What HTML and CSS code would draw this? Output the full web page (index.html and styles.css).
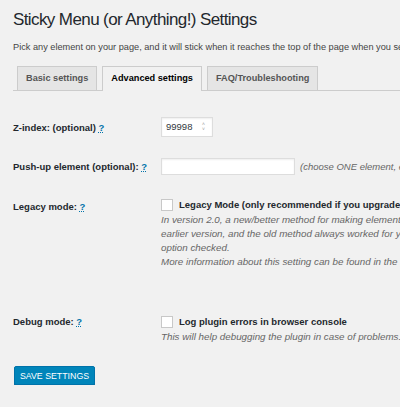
FILE: index.html
```html
<!DOCTYPE html>
<html>
<head>
<meta charset="utf-8">
<link rel="stylesheet" href="styles.css">
</head>
<body>
<div class="wrap">
  <h1 class="title">Sticky Menu (or Anything!) Settings</h1>
  <p class="intro">Pick any element on your page, and it will stick when it reaches the top of the page when you se</p>
  <nav class="tabs">
    <span class="tab">Basic settings</span>
    <span class="tab active">Advanced settings</span>
    <span class="tab">FAQ/Troubleshooting</span>
  </nav>
  <div class="form">
    <div class="row row-z">
      <div class="label">Z-index: (optional) <a class="help">?</a></div>
      <div class="field">
        <div class="num">99998<span class="spin">&#x2C4;<br>&#x2C5;</span></div>
      </div>
    </div>
    <div class="row row-push">
      <div class="label">Push-up element (optional): <a class="help">?</a></div>
      <div class="field inline">
        <div class="text-input"></div>
        <span class="hint">(choose ONE element, e.g.</span>
      </div>
    </div>
    <div class="row row-legacy">
      <div class="label">Legacy mode: <a class="help">?</a></div>
      <div class="field">
        <div class="check"><span class="box"></span>Legacy Mode (only recommended if you upgraded</div>
        <p class="desc">In version 2.0, a new/better method for making elements<br>earlier version, and the old method always worked for you<br>option checked.<br>More information about this setting can be found in the</p>
      </div>
    </div>
    <div class="row row-debug">
      <div class="label">Debug mode: <a class="help">?</a></div>
      <div class="field">
        <div class="check"><span class="box"></span>Log plugin errors in browser console</div>
        <p class="desc">This will help debugging the plugin in case of problems.</p>
      </div>
    </div>
  </div>
  <button class="save">SAVE SETTINGS</button>
</div>
</body>
</html>
```

FILE: styles.css
```css
html, body {
  margin: 0;
  padding: 0;
  background: #f1f1f1;
  overflow: hidden;
}
body {
  width: 400px;
  height: 407px;
  font-family: "Liberation Sans", Arial, sans-serif;
  color: #23282d;
}
.wrap {
  padding: 0 0 0 13px;
  white-space: nowrap;
  overflow: hidden;
}
.title {
  margin: 0;
  padding-top: 9px;
  font-size: 17px;
  letter-spacing: -0.6px;
  font-weight: 400;
  line-height: 22px;
  color: #23282d;
}
.intro {
  margin: 10px 0 0;
  font-size: 9.2px;
  line-height: 12px;
  color: #444;
}
.tabs {
  display: flex;
  margin-top: 13px;
  padding-left: 4px;
  border-bottom: 1px solid #ccc;
  height: 24px;
  gap: 5px;
}
.tab {
  display: block;
  height: 23px;
  line-height: 23px;
  padding: 0 8px;
  background: #e5e5e5;
  border: 1px solid #ccc;
  border-bottom: none;
  font-size: 9.2px;
  font-weight: 700;
  color: #555;
}
.tab.active {
  background: #f1f1f1;
  color: #000;
  height: 24px;
  margin-bottom: -1px;
}
.form {
  margin-top: 26px;
}
.row {
  display: flex;
  font-size: 9.5px;
}
.label {
  width: 148px;
  flex: none;
  font-weight: 700;
  color: #23282d;
}
.help {
  color: #0073aa;
  text-decoration: underline;
  text-decoration-style: dotted;
}
.row-z .label { padding-top: 5px; }
.row-z { height: 41px; }
.num {
  width: 46px;
  height: 18px;
  background: #fff;
  border: 1px solid #ddd;
  box-shadow: inset 0 1px 2px rgba(0,0,0,.07);
  font-size: 9.5px;
  line-height: 18px;
  padding-left: 4px;
  position: relative;
  color: #32373c;
}
.spin {
  position: absolute;
  right: 7px;
  top: 4px;
  font-size: 5px;
  line-height: 5px;
  color: #999;
}
.row-push { height: 40px; }
.row-push .label { padding-top: 3px; }
.inline { display: flex; align-items: center; align-self: flex-start; }
.text-input {
  width: 132px;
  height: 15px;
  background: #fff;
  border: 1px solid #ddd;
  box-shadow: inset 0 1px 2px rgba(0,0,0,.07);
}
.hint {
  margin-left: 5px;
  font-style: italic;
  color: #666;
}
.row-legacy { height: 117px; }
.row-legacy .label { padding-top: 3px; }
.check {
  display: flex;
  align-items: center;
  font-weight: 700;
  color: #23282d;
  height: 13px;
}
.box {
  width: 10px;
  height: 10px;
  background: #fff;
  border: 1px solid #c8c8c8;
  margin-right: 6px;
  flex: none;
}
.desc {
  margin: 2px 0 0;
  font-style: italic;
  color: #666;
  line-height: 14px;
  font-size: 9.8px;
}
.row-debug { height: 51px; }
.row-debug .label { padding-top: 1px; }
.save {
  display: block;
  margin-top: 0;
  margin-left: 1px;
  width: 81px;
  height: 19px;
  padding: 0;
  background: #0085ba;
  border: 1px solid #0073aa;
  border-radius: 2px;
  box-shadow: 0 1px 0 #006799;
  color: #fff;
  font-family: "Liberation Sans", Arial, sans-serif;
  font-size: 8.8px;
  font-weight: 400;
}
```
